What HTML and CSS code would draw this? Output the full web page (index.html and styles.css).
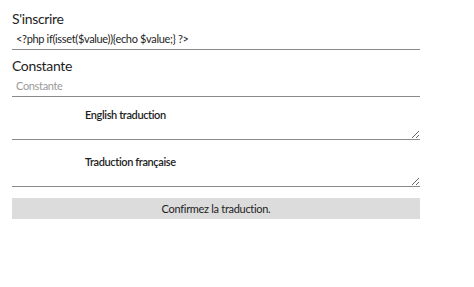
FILE: index.html
```html
<!DOCTYPE html>
<html lang="fr">
<head>
<meta charset="utf-8">
<link rel="stylesheet" href="styles.css">
</head>
<body>
<form class="form">
  <div class="field">
    <label class="title">S'inscrire</label>
    <input class="line-input" type="text" value="<?php if(isset($value)){echo $value;} ?>">
  </div>
  <div class="field field-last">
    <label class="title">Constante</label>
    <input class="line-input" type="text" placeholder="Constante">
  </div>
  <div class="area">
    <textarea class="line-area" placeholder="English traduction"></textarea>
  </div>
  <div class="area">
    <textarea class="line-area" placeholder="Traduction française"></textarea>
  </div>
  <button class="confirm" type="button">Confirmez la traduction.</button>
</form>
</body>
</html>
```
FILE: styles.css
```css
html, body {
  margin: 0;
  padding: 0;
  background: #ffffff;
}
body {
  font-family: Lato, "Open Sans", sans-serif;
  color: #1e1e1e;
}
.form {
  width: 408px;
  padding: 10px 12px 0 12px;
  display: flex;
  flex-direction: column;
}
.field {
  display: flex;
  flex-direction: column;
  margin-bottom: 7px;
}
.field-last {
  margin-bottom: 0;
}
.title {
  font-size: 14px;
  line-height: 18px;
  letter-spacing: -0.35px;
  color: #1e1e1e;
}
.line-input {
  font-family: inherit;
  font-size: 11px;
  letter-spacing: -0.33px;
  height: 22px;
  padding: 0 4px;
  border: none;
  border-bottom: 1px solid #8a8a8a;
  outline: none;
  color: #1e1e1e;
  box-sizing: border-box;
}
.line-input::placeholder {
  color: #9a9a9a;
}
.area {
  display: flex;
  margin-bottom: 4px;
}
.line-area {
  width: 408px;
  height: 43px;
  box-sizing: border-box;
  font-family: inherit;
  font-size: 11px;
  font-weight: 600;
  letter-spacing: -0.38px;
  padding: 11px 0 0 73px;
  border: none;
  border-bottom: 1px solid #8a8a8a;
  outline: none;
}
.line-area::placeholder {
  color: #1e1e1e;
}
.confirm {
  margin-top: 7px;
  height: 21px;
  border: none;
  background: #dcdcdc;
  font-family: inherit;
  font-size: 11px;
  letter-spacing: -0.3px;
  color: #1e1e1e;
  padding: 0;
}
```
